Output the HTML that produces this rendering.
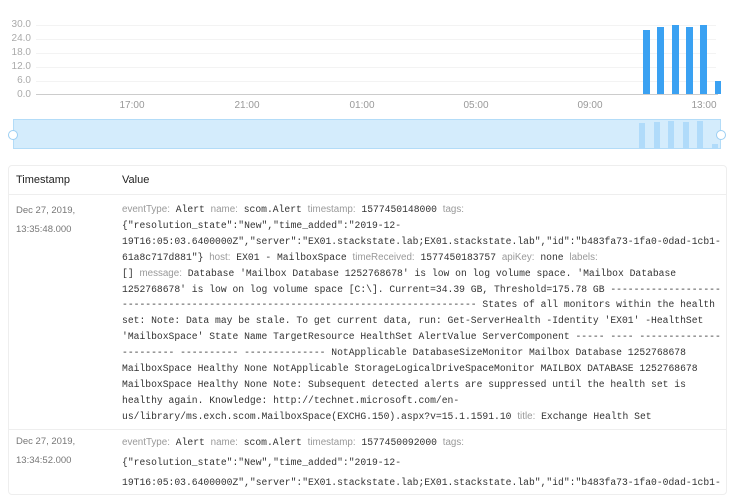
<!DOCTYPE html>
<html><head><meta charset="utf-8"><style>
*{margin:0;padding:0;box-sizing:border-box}
body{width:736px;height:475px;overflow:hidden;background:#fff;position:relative;font-family:"Liberation Sans",sans-serif}
.yl{position:absolute;left:0;width:31px;text-align:right;font-size:10px;color:#aaa;line-height:12px}
.xl{position:absolute;top:100px;width:40px;margin-left:-20px;text-align:center;font-size:10px;color:#999;line-height:12px}
.grid{position:absolute;left:36px;width:680px;height:1px;background:#f3f3f3}
.bar{position:absolute;background:#3aa1f2;top:auto;width:7px}
.card{position:absolute;left:8px;top:165px;width:719px;height:330px;border:1px solid #eee;border-radius:4px}
.th{position:absolute;top:173px;font-size:11px;color:#222;line-height:14px}
.ts{position:absolute;left:16px;font-size:9.5px;color:#777;line-height:19px}
.val{position:absolute;left:122px;width:600px;overflow:hidden;font-family:"Liberation Mono",monospace;font-size:9.7px;color:#333;line-height:15.9px;white-space:pre}
.val i{font-style:normal;font-family:"Liberation Sans",sans-serif;color:#999;font-size:9.8px}
</style></head><body>
<div class="grid" style="top:25px"></div>
<div class="grid" style="top:39px"></div>
<div class="grid" style="top:53px"></div>
<div class="grid" style="top:67px"></div>
<div class="grid" style="top:81px"></div>
<div style="position:absolute;left:36px;top:94px;width:682px;height:1px;background:#ccc"></div>
<div class="yl" style="top:19px">30.0</div>
<div class="yl" style="top:33px">24.0</div>
<div class="yl" style="top:47px">18.0</div>
<div class="yl" style="top:61px">12.0</div>
<div class="yl" style="top:75px">6.0</div>
<div class="yl" style="top:89px">0.0</div>
<div class="xl" style="left:132px">17:00</div>
<div class="xl" style="left:247px">21:00</div>
<div class="xl" style="left:362px">01:00</div>
<div class="xl" style="left:476px">05:00</div>
<div class="xl" style="left:590px">09:00</div>
<div class="xl" style="left:704px">13:00</div>
<div class="bar" style="left:643px;top:30px;height:64px"></div>
<div class="bar" style="left:657px;top:27px;height:67px"></div>
<div class="bar" style="left:672px;top:25px;height:69px"></div>
<div class="bar" style="left:686px;top:27px;height:67px"></div>
<div class="bar" style="left:700px;top:25px;height:69px"></div>
<div class="bar" style="left:715px;top:81px;height:13px;width:6px"></div>
<div style="position:absolute;left:13px;top:119px;width:708px;height:30px;background:#d4ecfc;border:1px solid #b3dcf8"></div>
<div style="position:absolute;left:639px;top:123px;width:6px;height:26px;background:#b0dbfa"></div>
<div style="position:absolute;left:654px;top:122px;width:6px;height:27px;background:#b0dbfa"></div>
<div style="position:absolute;left:668px;top:121px;width:6px;height:28px;background:#b0dbfa"></div>
<div style="position:absolute;left:683px;top:122px;width:6px;height:27px;background:#b0dbfa"></div>
<div style="position:absolute;left:697px;top:121px;width:6px;height:28px;background:#b0dbfa"></div>
<div style="position:absolute;left:712px;top:144px;width:6px;height:5px;background:#b0dbfa"></div>
<div style="position:absolute;left:8px;top:130px;width:10px;height:10px;border-radius:50%;background:#fff;border:1px solid #9ccff3"></div>
<div style="position:absolute;left:716px;top:130px;width:10px;height:10px;border-radius:50%;background:#fff;border:1px solid #9ccff3"></div>
<div class="card"></div>
<div class="th" style="left:16px">Timestamp</div>
<div class="th" style="left:122px">Value</div>
<div style="position:absolute;left:9px;top:194px;width:717px;height:1px;background:#eee"></div>
<div style="position:absolute;left:9px;top:429px;width:717px;height:1px;background:#eee"></div>
<div class="ts" style="top:201px">Dec 27, 2019,<br>13:35:48.000</div>
<div class="val" style="top:202px"><i>eventType:</i> Alert <i>name:</i> scom.Alert <i>timestamp:</i> 1577450148000 <i>tags:</i>
{"resolution_state":"New","time_added":"2019-12-
19T16:05:03.6400000Z","server":"EX01.stackstate.lab;EX01.stackstate.lab","id":"b483fa73-1fa0-0dad-1cb1-
61a8c717d881"} <i>host:</i> EX01 - MailboxSpace <i>timeReceived:</i> 1577450183757 <i>apiKey:</i> none <i>labels:</i>
[] <i>message:</i> Database 'Mailbox Database 1252768678' is low on log volume space. 'Mailbox Database
1252768678' is low on log volume space [C:\]. Current=34.39 GB, Threshold=175.78 GB -------------------
------------------------------------------------------------- States of all monitors within the health
set: Note: Data may be stale. To get current data, run: Get-ServerHealth -Identity 'EX01' -HealthSet
'MailboxSpace' State Name TargetResource HealthSet AlertValue ServerComponent ----- ---- ---------------
--------- ---------- -------------- NotApplicable DatabaseSizeMonitor Mailbox Database 1252768678
MailboxSpace Healthy None NotApplicable StorageLogicalDriveSpaceMonitor MAILBOX DATABASE 1252768678
MailboxSpace Healthy None Note: Subsequent detected alerts are suppressed until the health set is
healthy again. Knowledge: http://technet.microsoft.com/en-
us/library/ms.exch.scom.MailboxSpace(EXCHG.150).aspx?v=15.1.1591.10 <i>title:</i> Exchange Health Set</div>
<div class="ts" style="top:432px">Dec 27, 2019,<br>13:34:52.000</div>
<div class="val" style="top:433px;line-height:20px"><i>eventType:</i> Alert <i>name:</i> scom.Alert <i>timestamp:</i> 1577450092000 <i>tags:</i>
{"resolution_state":"New","time_added":"2019-12-
19T16:05:03.6400000Z","server":"EX01.stackstate.lab;EX01.stackstate.lab","id":"b483fa73-1fa0-0dad-1cb1-</div>
</body></html>
